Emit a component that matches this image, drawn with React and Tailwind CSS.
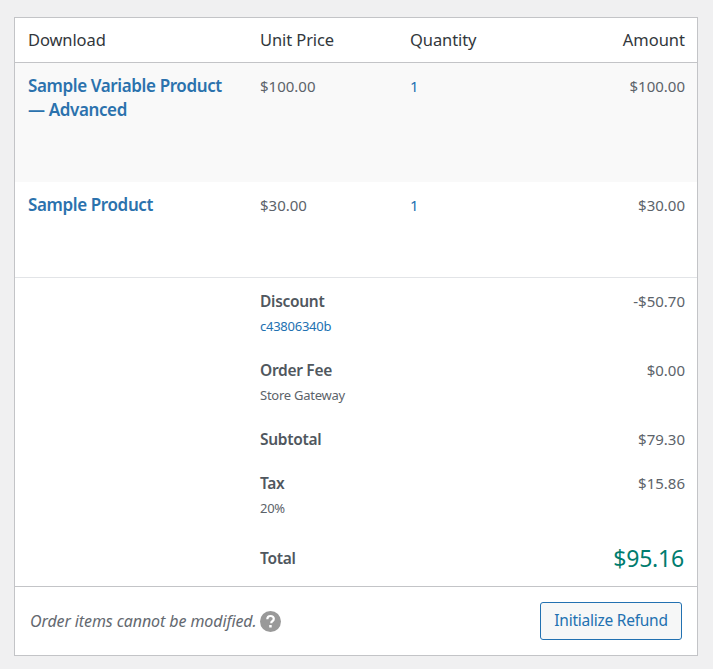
import React from 'react';

const fontStack = { fontFamily: '"Noto Sans", sans-serif' };

const items = [
  { name: 'Sample Variable Product — Advanced', price: '$100.00', qty: '1', amount: '$100.00', shaded: true },
  { name: 'Sample Product', price: '$30.00', qty: '1', amount: '$30.00' },
];

const totals = [
  { label: 'Discount', sub: 'c43806340b', subLink: true, value: '-$50.70', h: 'h-[69px]' },
  { label: 'Order Fee', sub: 'Store Gateway', value: '$0.00', h: 'h-[69px]' },
  { label: 'Subtotal', value: '$79.30', h: 'h-[44px]' },
  { label: 'Tax', sub: '20%', value: '$15.86', h: 'h-[69px]' },
];

const HelpIcon = () => (
  <svg width="21" height="21" viewBox="0 0 21 21" className="shrink-0">
    <circle cx="10.5" cy="10.5" r="10.5" fill="#999999" />
    <path d="M7.3 8.2c0-2 1.4-3.2 3.3-3.2 1.9 0 3.2 1.1 3.2 2.8 0 1.2-.6 1.9-1.5 2.5-.8.5-1 .8-1 1.6v.3" fill="none" stroke="#fff" strokeWidth="2.2" />
    <rect x="9.2" y="14" width="2.5" height="2.5" fill="#fff" />
  </svg>
);

const App = () => {
  return (
    <div className="w-[713px] h-[669px] bg-[#f0f0f1] pt-[17px] pl-[14px]" style={fontStack}>
      <div className="w-[684px] h-[639px] bg-white border border-[#c3c4c7] flex flex-col">
        {/* header row */}
        <div className="grid grid-cols-[232px_150px_1fr] pl-[13px] pr-[12px] h-[45px] shrink-0 items-center border-b border-[#c3c4c7] text-[16.5px] text-[#32373c] tracking-[-0.1px]">
          <div>Download</div>
          <div>Unit Price</div>
          <div className="flex justify-between">
            <span>Quantity</span>
            <span className="tracking-[0px]">Amount</span>
          </div>
        </div>

        {items.map((item) => (
          <div
            key={item.name}
            className={`grid grid-cols-[232px_150px_1fr] pl-[13px] pr-[12px] pt-[11px] ${
              item.shaded ? 'h-[119px] bg-[#f9f9f9]' : 'h-[96px] border-b border-[#e2e4e7]'
            }`}
          >
            <div className="text-[17px] leading-[24px] font-semibold text-[#2b72ad] tracking-[-0.38px] w-[205px]">{item.name}</div>
            <div className="text-[15px] leading-[24px] text-[#5c636a] tracking-[0px]">{item.price}</div>
            <div className="flex justify-between text-[15px] leading-[24px] tracking-[0px]">
              <span className="text-[#2271b1]">{item.qty}</span>
              <span className="text-[#5c636a]">{item.amount}</span>
            </div>
          </div>
        ))}

        {/* totals */}
        <div className="pt-[11px] pl-[245px] pr-[12px] flex-1 flex flex-col border-b border-[#c3c4c7]">
          {totals.map((row) => (
            <div key={row.label} className={`flex justify-between ${row.h}`}>
              <div>
                <div className="text-[15.5px] leading-[24px] font-semibold text-[#50575e] tracking-[-0.3px]">{row.label}</div>
                {row.sub && (
                  <div className={`text-[13px] leading-[25px] pt-[1px] tracking-[-0.25px] ${row.subLink ? 'text-[#2271b1]' : 'text-[#5c636a]'}`}>{row.sub}</div>
                )}
              </div>
              <div className="text-[15px] leading-[24px] text-[#5c636a] tracking-[0px]">{row.value}</div>
            </div>
          ))}
          <div className="flex justify-between items-center h-[37px]">
            <div className="text-[15.5px] font-semibold text-[#50575e] tracking-[-0.3px]">Total</div>
            <div className="text-[23px] text-[#007c6e] tracking-[-0.2px] pr-[1px]">$95.16</div>
          </div>
        </div>

        {/* footer */}
        <div className="h-[68px] shrink-0 flex items-center justify-between pl-[15px] pr-[15px]">
          <div className="flex items-center gap-[4px]">
            <span className="text-[16px] italic text-[#646970] tracking-[-0.1px]">Order items cannot be modified.</span>
            <HelpIcon />
          </div>
          <button className="w-[142px] h-[38px] rounded-[3px] border border-[#2271b1] bg-[#f6f7f7] text-[15.5px] text-[#2271b1] tracking-[-0.25px]">
            Initialize Refund
          </button>
        </div>
      </div>
    </div>
  );
};

export default App;
